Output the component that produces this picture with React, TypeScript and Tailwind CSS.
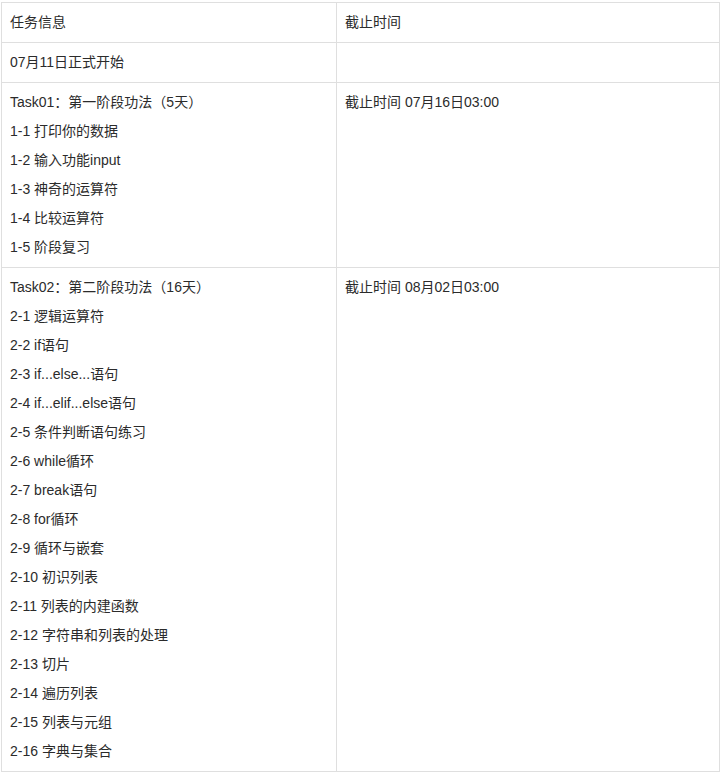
const tasks = [
  {
    info: ['07月11日正式开始'],
    deadline: '',
  },
  {
    info: [
      'Task01：第一阶段功法（5天）',
      '1-1 打印你的数据',
      '1-2 输入功能input',
      '1-3 神奇的运算符',
      '1-4 比较运算符',
      '1-5 阶段复习',
    ],
    deadline: '截止时间 07月16日03:00',
  },
  {
    info: [
      'Task02：第二阶段功法（16天）',
      '2-1 逻辑运算符',
      '2-2 if语句',
      '2-3 if...else...语句',
      '2-4 if...elif...else语句',
      '2-5 条件判断语句练习',
      '2-6 while循环',
      '2-7 break语句',
      '2-8 for循环',
      '2-9 循环与嵌套',
      '2-10 初识列表',
      '2-11 列表的内建函数',
      '2-12 字符串和列表的处理',
      '2-13 切片',
      '2-14 遍历列表',
      '2-15 列表与元组',
      '2-16 字典与集合',
    ],
    deadline: '截止时间 08月02日03:00',
  },
];

export default function App() {
  return (
    <div className="bg-white pl-px pt-[2px] font-['Liberation_Sans','Noto_Sans_CJK_SC',sans-serif] text-[14px] leading-[29px] text-[#2b2b2b]">
      <table className="w-[719px] table-fixed border-collapse">
        <colgroup>
          <col className="w-[335px]" />
          <col />
        </colgroup>
        <thead>
          <tr>
            <th className="border border-[#dfdfdf] px-[8px] py-[5px] text-left font-normal">
              任务信息
            </th>
            <th className="border border-[#dfdfdf] px-[8px] py-[5px] text-left font-normal">
              截止时间
            </th>
          </tr>
        </thead>
        <tbody>
          {tasks.map((t, i) => (
            <tr key={i}>
              <td className="border border-[#dfdfdf] px-[8px] py-[5px] align-top">
                {t.info.map((line) => (
                  <div key={line}>{line}</div>
                ))}
              </td>
              <td className="border border-[#dfdfdf] px-[8px] py-[5px] align-top">
                {t.deadline}
              </td>
            </tr>
          ))}
        </tbody>
      </table>
    </div>
  );
}
